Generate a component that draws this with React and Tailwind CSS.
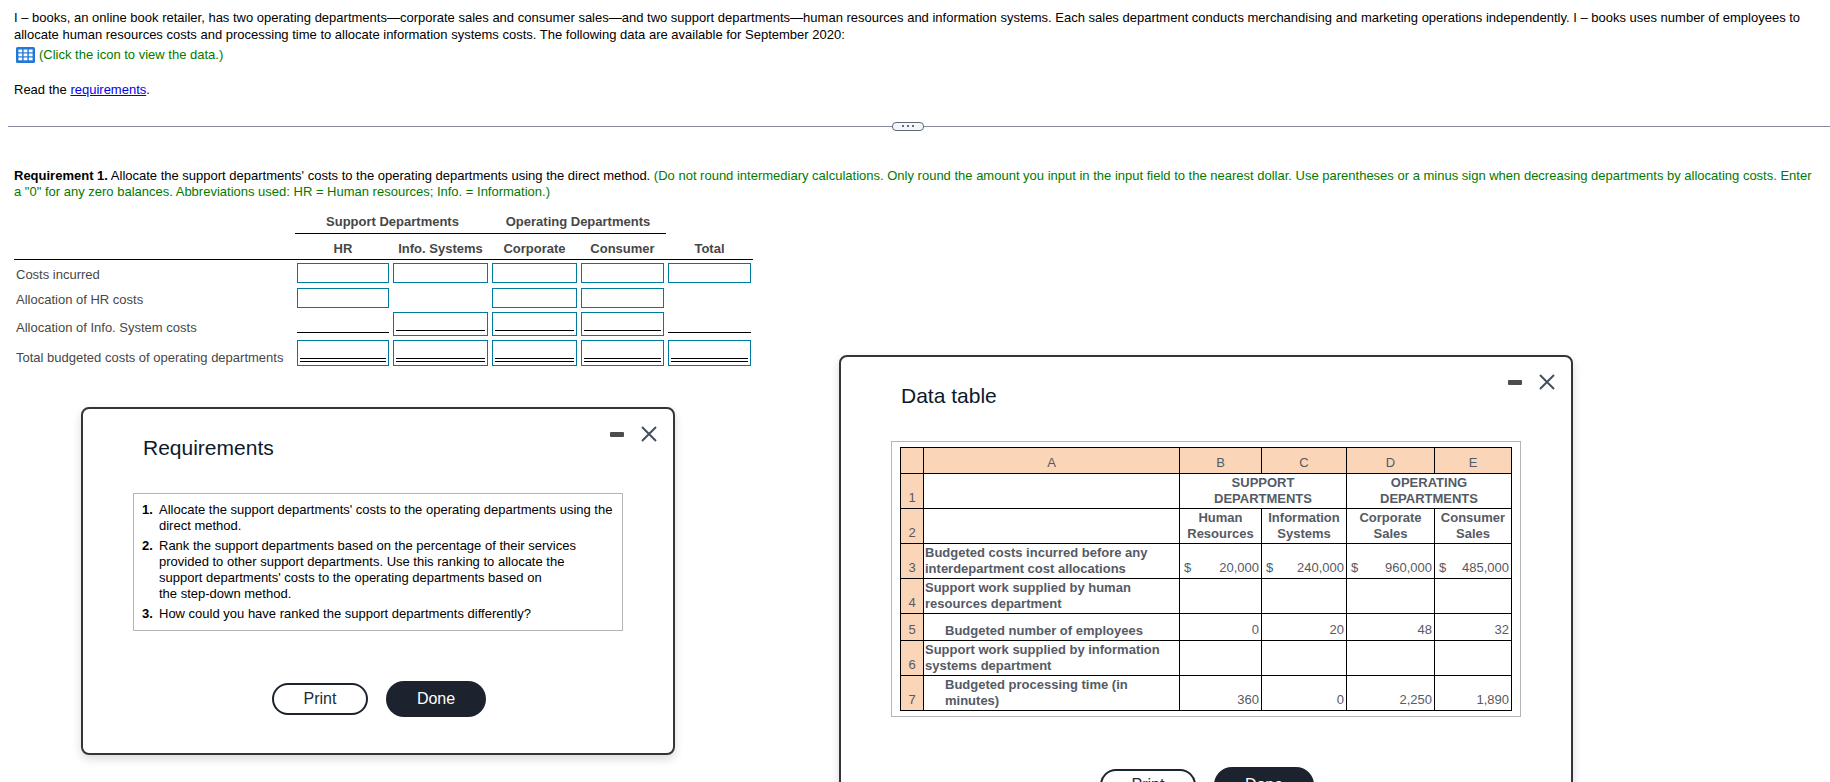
import React from "react";

const COLUMNS = ["HR", "Info. Systems", "Corporate", "Consumer", "Total"];

// box = plain input, single / double = input with total rule, rule = line only
const ALLOCATION_ROWS = [
  { label: "Costs incurred", cells: ["box", "box", "box", "box", "box"] },
  { label: "Allocation of HR costs", cells: ["box", "", "box", "box", ""] },
  {
    label: "Allocation of Info. System costs",
    cells: ["rule", "single", "single", "single", "rule"],
  },
  {
    label: "Total budgeted costs of operating departments",
    cells: ["double", "double", "double", "double", "double"],
  },
];

const DATA_ROWS = [
  {
    label: "Budgeted costs incurred before any interdepartment cost allocations",
    currency: true,
    values: ["20,000", "240,000", "960,000", "485,000"],
  },
  {
    label: "Support work supplied by human resources department",
    values: ["", "", "", ""],
  },
  {
    label: "Budgeted number of employees",
    indent: true,
    values: ["0", "20", "48", "32"],
  },
  {
    label: "Support work supplied by information systems department",
    values: ["", "", "", ""],
  },
  {
    label: "Budgeted processing time (in minutes)",
    indent: true,
    values: ["360", "0", "2,250", "1,890"],
  },
];

function GridIcon() {
  return (
    <svg width="19" height="16" viewBox="0 0 19 16" aria-hidden="true">
      <rect width="19" height="16" rx="1.5" fill="#2277d8" />
      <g fill="#fff">
        {[2.5, 6.5, 10.5].map((y) =>
          [2.4, 7.6, 12.8].map((x) => (
            <rect key={`${x}-${y}`} x={x} y={y} width="3.8" height="2.8" />
          ))
        )}
      </g>
    </svg>
  );
}

function AmountCell({ kind, label }) {
  if (kind === "rule") {
    return <div className="mb-[3px] border-b border-black" />;
  }
  if (!kind) {
    return null;
  }
  if (kind === "box") {
    return (
      <input
        type="text"
        aria-label={label}
        className="block h-5 w-full border border-[#007a9c] bg-white px-1 outline-none"
      />
    );
  }
  return (
    <div
      className={
        kind === "single"
          ? "h-6 border border-[#007a9c] px-[2px]"
          : "h-[26px] border border-[#007a9c] px-[2px]"
      }
    >
      <input
        type="text"
        aria-label={label}
        className={
          kind === "single"
            ? "block h-[18px] w-full border-b border-black outline-none"
            : "block h-[21px] w-full border-b-4 border-double border-black outline-none"
        }
      />
    </div>
  );
}

function AllocationTable() {
  return (
    <table className="mt-[14px] w-[739px] table-fixed border-collapse text-[13px] leading-4 text-[#474747]">
      <colgroup>
        <col />
        <col className="w-[96px]" />
        <col className="w-[99px]" />
        <col className="w-[89px]" />
        <col className="w-[87px]" />
        <col className="w-[87px]" />
      </colgroup>
      <thead>
        <tr className="h-[19px]">
          <td />
          <th colSpan={2} className="border-b border-black align-top">
            Support Departments
          </th>
          <th colSpan={2} className="border-b border-black align-top">
            Operating Departments
          </th>
          <td />
        </tr>
        <tr className="h-[26px] border-b border-black">
          <td />
          {COLUMNS.map((column) => (
            <th key={column} scope="col" className="pb-[2px] align-bottom">
              {column}
            </th>
          ))}
        </tr>
      </thead>
      <tbody>
        {ALLOCATION_ROWS.map((row) => (
          <tr key={row.label}>
            <th scope="row" className="pb-[2px] pl-[2px] text-left align-bottom font-normal">
              {row.label}
            </th>
            {row.cells.map((kind, i) => (
              <td
                key={COLUMNS[i]}
                className={
                  kind === "box" ? "px-[2px] pt-[3px] pb-[2px] align-bottom" : "px-[2px] py-[2px] align-bottom"
                }
              >
                <AmountCell kind={kind} label={`${row.label}, ${COLUMNS[i]}`} />
              </td>
            ))}
          </tr>
        ))}
      </tbody>
    </table>
  );
}

function Dialog({ title, className, children }) {
  return (
    <section
      role="dialog"
      aria-label={title}
      className={`absolute rounded-lg border-2 border-[#333638] bg-white px-[50px] pb-9 shadow-[0_4px_10px_rgba(0,0,0,0.15)] ${className}`}
    >
      <header className="flex h-[84px] items-start justify-between">
        <h2 className="mt-[25px] pl-[10px] text-[21px] leading-7 text-[#0b1a2b]">{title}</h2>
        <div className="-mr-[34px] mt-4 flex items-center gap-[17px]">
          <button type="button" aria-label="Minimize" className="flex h-[18px] w-[14px] items-center">
            <span className="h-[5px] w-full rounded-[1px] bg-[#4d4d4d]" />
          </button>
          <button type="button" aria-label="Close">
            <svg width="16" height="16" viewBox="0 0 16 16" fill="none" stroke="#44505e" strokeWidth="2">
              <path d="M1 1l14 14M15 1L1 15" />
            </svg>
          </button>
        </div>
      </header>
      {children}
      <footer className="mt-[50px] flex items-center justify-center gap-[18px] pl-[2px] text-[16px]">
        <button
          type="button"
          className="h-8 w-24 rounded-full border-2 border-[#1c222e] bg-white text-[#252b36]"
        >
          Print
        </button>
        <button type="button" className="h-9 w-[100px] rounded-full bg-[#1c222e] text-white">
          Done
        </button>
      </footer>
    </section>
  );
}

function DataTable() {
  const head = "border border-black bg-[#fbd5b8] pb-[2px] font-normal align-bottom";
  const group = "border border-black px-1 pb-px align-bottom";

  return (
    <table className="w-full table-fixed border-collapse text-[13px] leading-4 text-[#555a64]">
      <colgroup>
        <col className="w-[23px]" />
        <col />
        <col className="w-[82px]" />
        <col className="w-[85px]" />
        <col className="w-[88px]" />
        <col className="w-[77px]" />
      </colgroup>
      <thead>
        <tr className="h-[26px]">
          <td className={head} />
          {["A", "B", "C", "D", "E"].map((letter) => (
            <th key={letter} scope="col" className={head}>
              {letter}
            </th>
          ))}
        </tr>
      </thead>
      <tbody>
        <tr className="h-[35px]">
          <th className={head}>1</th>
          <td className="border border-black" />
          <th colSpan={2} className={group}>
            SUPPORT
            <br />
            DEPARTMENTS
          </th>
          <th colSpan={2} className={group}>
            OPERATING
            <br />
            DEPARTMENTS
          </th>
        </tr>
        <tr className="h-[35px]">
          <th className={head}>2</th>
          <td className="border border-black" />
          {["Human Resources", "Information Systems", "Corporate Sales", "Consumer Sales"].map((name) => (
            <th key={name} className={group}>
              {name}
            </th>
          ))}
        </tr>
        {DATA_ROWS.map((row, i) => (
          <tr key={row.label} className={row.values[1] === "20" ? "h-[27px]" : "h-[35px]"}>
            <th className={head}>{i + 3}</th>
            <th
              scope="row"
              className={`border border-black pr-3 pb-px text-left align-bottom ${row.indent ? "pl-[21px]" : "pl-px"}`}
            >
              {row.label}
            </th>
            {row.values.map((value, j) => (
              <td key={j} className="border border-black pr-[2px] pb-[2px] pl-1 align-bottom">
                <div className="flex justify-between">
                  <span>{row.currency && "$"}</span>
                  <span>{value}</span>
                </div>
              </td>
            ))}
          </tr>
        ))}
      </tbody>
    </table>
  );
}

export default function App() {
  return (
    <main className="relative h-screen overflow-hidden bg-white font-['Liberation_Sans',Arial,sans-serif] text-[13px] leading-4 text-black">
      <div className="px-[14px] pt-[9px]">
        <p className="leading-[17px]">
          I – books, an online book retailer, has two operating departments—corporate sales and consumer
          sales—and two support departments—human resources and information systems. Each sales department
          conducts merchandising and marketing operations independently. I – books uses number of employees
          to allocate human resources costs and processing time to allocate information systems costs. The
          following data are available for September 2020:
        </p>
        <button type="button" className="mt-1 ml-[2px] flex items-start gap-1 text-[#007a00]">
          <GridIcon />
          (Click the icon to view the data.)
        </button>
        <p className="mt-[19px]">
          Read the{" "}
          <a href="#requirements" className="text-[#0000ee] underline">
            requirements
          </a>
          .
        </p>
      </div>

      <div className="mt-[23px] ml-2 flex h-[10px] items-center">
        <div className="h-px flex-1 bg-[#868a9c]" />
        <button
          type="button"
          aria-label="Resize panes"
          className="flex h-[9px] w-8 items-center justify-center gap-[3px] rounded-[4px] border border-[#5f6b7a] bg-[#f5f6f8]"
        >
          <span className="size-[2px] bg-[#5f6b7a]" />
          <span className="size-[2px] bg-[#5f6b7a]" />
          <span className="size-[2px] bg-[#5f6b7a]" />
        </button>
        <div className="h-px flex-1 bg-[#868a9c]" />
        <div className="h-px w-[22px] bg-[#868a9c]" />
      </div>

      <div className="px-[14px] pt-[37px]">
        <p>
          <b>Requirement 1.</b> Allocate the support departments' costs to the operating departments using
          the direct method.{" "}
          <span className="text-[#007a00]">
            (Do not round intermediary calculations. Only round the amount you input in the input field to
            the nearest dollar. Use parentheses or a minus sign when decreasing departments by allocating
            costs. Enter a "0" for any zero balances. Abbreviations used: HR = Human resources; Info. =
            Information.)
          </span>
        </p>
        <AllocationTable />
      </div>

      <Dialog title="Requirements" className="top-[407px] left-[81px] w-[594px]">
        <ol id="requirements" className="space-y-1 border border-[#b5b5b5] py-2 pr-2 pl-2">
          {[
            ["Allocate the support departments' costs to the operating departments using the direct method."],
            [
              "Rank the support departments based on the percentage of their services",
              "provided to other support departments. Use this ranking to allocate the",
              "support departments' costs to the operating departments based on",
              "the step-down method.",
            ],
            ["How could you have ranked the support departments differently?"],
          ].map((lines, i) => (
            <li key={i} className="flex">
              <b className="w-[17px] shrink-0">{i + 1}.</b>
              <div>
                {lines.map((line) => (
                  <div key={line}>{line}</div>
                ))}
              </div>
            </li>
          ))}
        </ol>
      </Dialog>

      <Dialog title="Data table" className="top-[355px] left-[839px] w-[734px]">
        <div className="border border-[#b5b5b5] px-2 py-[5px]">
          <DataTable />
        </div>
      </Dialog>
    </main>
  );
}
